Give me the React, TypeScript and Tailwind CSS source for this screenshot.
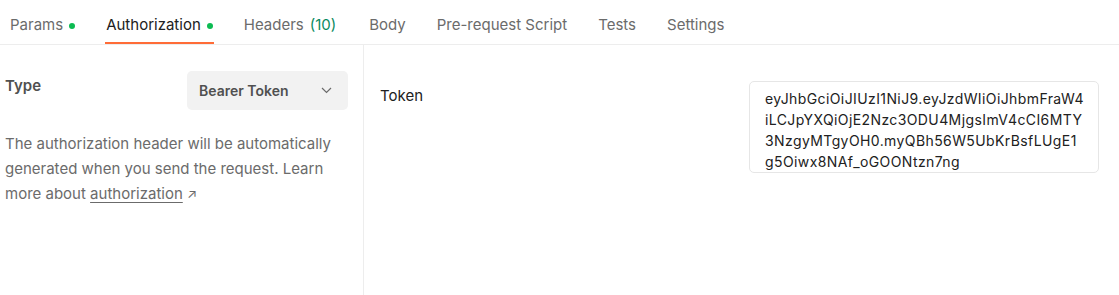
import React from 'react';

const tabs = [
  { label: 'Params', dot: true },
  { label: 'Authorization', dot: true, active: true },
  { label: 'Headers', count: '(10)' },
  { label: 'Body' },
  { label: 'Pre-request Script' },
  { label: 'Tests' },
  { label: 'Settings' },
];

// token shown wrapped the same way as the field does it
const TOKEN_LINES = [
  'eyJhbGciOiJIUzI1NiJ9.eyJzdWIiOiJhbmFraW4',
  'iLCJpYXQiOjE2Nzc3ODU4MjgsImV4cCI6MTY',
  '3NzgyMTgyOH0.myQBh56W5UbKrBsfLUgE1',
  'g5Oiwx8NAf_oGOONtzn7ng',
];

export default function App() {
  return (
    <div className="w-[1119px] h-[295px] bg-white flex flex-col font-['Inter',sans-serif] text-[15px] overflow-hidden">
      {/* tabs */}
      <div className="h-[45px] flex items-stretch gap-[31px] pl-[10px] border-b border-[#ededed] shrink-0">
        {tabs.map((t) => (
          <div
            key={t.label}
            className={
              'relative flex items-center gap-[6px] pt-[6px] ' +
              (t.active ? 'text-[#212121]' : 'text-[#6b6b6b]') +
              (t.count ? ' pr-[2px]' : '')
            }
          >
            <span>{t.label}</span>
            {t.count && <span className="text-[#0a8a61]">{t.count}</span>}
            {t.dot && <span className="w-[6px] h-[6px] rounded-full bg-[#0cbb52] mt-[1px]" />}
            {t.active && (
              <span className="absolute left-[-1px] right-[-1px] bottom-0 h-[2px] bg-[#ff6c37]" />
            )}
          </div>
        ))}
      </div>

      <div className="flex flex-1">
        {/* left: type */}
        <div className="w-[364px] shrink-0 border-r border-[#ededed] pl-[5px] pr-[15px] pt-[26px]">
          <div className="flex justify-between">
            <span className="font-semibold text-[#505050] pt-[4px]">Type</span>
            <button className="w-[161px] h-[39px] rounded-[5px] bg-[#f2f2f2] flex items-center justify-between pl-[12px] pr-[16px] font-semibold text-[#505050] text-[14px]">
              Bearer Token
              <svg width="11" height="7" viewBox="0 0 11 7" fill="none">
                <path d="M1 1l4.5 4.5L10 1" stroke="#6b6b6b" strokeWidth="1.2" />
              </svg>
            </button>
          </div>
          <p className="mt-[21px] leading-[25px] text-[#6b6b6b]">
            The authorization header will be automatically generated when you send the request. Learn
            more about <span className="underline underline-offset-[3px]">authorization</span>{' '}
            <span className="text-[13px]">↗</span>
          </p>
        </div>

        {/* right: token */}
        <div className="flex-1 flex justify-between pl-[16px] pr-[20px] pt-[36px]">
          <span className="text-[#212121] pt-[4px]">Token</span>
          <div className="w-[350px] h-[92px] border border-[#e6e6e6] rounded-[5px] pl-[15px] pr-[8px] pt-[6px] text-[#212121] text-[14px] tracking-[0.4px] leading-[21px] whitespace-nowrap">
            {TOKEN_LINES.map((l) => (
              <div key={l}>{l}</div>
            ))}
          </div>
        </div>
      </div>
    </div>
  );
}
